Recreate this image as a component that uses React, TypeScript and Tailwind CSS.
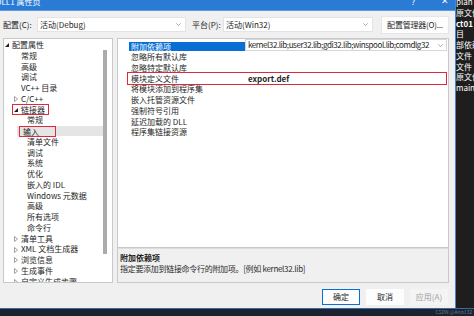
import React from "react";

type TreeItem = { t: string; lvl: 0 | 1 | 2; tri?: "open" | "closed"; red?: boolean; sel?: boolean };

const treeItems: TreeItem[] = [
  { t: "配置属性", lvl: 0, tri: "open" },
  { t: "常规", lvl: 1 },
  { t: "高级", lvl: 1 },
  { t: "调试", lvl: 1 },
  { t: "VC++ 目录", lvl: 1 },
  { t: "C/C++", lvl: 1, tri: "closed" },
  { t: "链接器", lvl: 1, tri: "open", red: true },
  { t: "常规", lvl: 2 },
  { t: "输入", lvl: 2, sel: true },
  { t: "清单文件", lvl: 2 },
  { t: "调试", lvl: 2 },
  { t: "系统", lvl: 2 },
  { t: "优化", lvl: 2 },
  { t: "嵌入的 IDL", lvl: 2 },
  { t: "Windows 元数据", lvl: 2 },
  { t: "高级", lvl: 2 },
  { t: "所有选项", lvl: 2 },
  { t: "命令行", lvl: 2 },
  { t: "清单工具", lvl: 1, tri: "closed" },
  { t: "XML 文档生成器", lvl: 1, tri: "closed" },
  { t: "浏览信息", lvl: 1, tri: "closed" },
  { t: "生成事件", lvl: 1, tri: "closed" },
  { t: "自定义生成步骤", lvl: 1, tri: "closed" },
];

const props: { k: string; v?: string; bold?: boolean; sel?: boolean; red?: boolean }[] = [
  { k: "附加依赖项", v: "kernel32.lib;user32.lib;gdi32.lib;winspool.lib;comdlg32", sel: true },
  { k: "忽略所有默认库" },
  { k: "忽略特定默认库" },
  { k: "模块定义文件", v: "export.def", bold: true, red: true },
  { k: "将模块添加到程序集" },
  { k: "嵌入托管资源文件" },
  { k: "强制符号引用" },
  { k: "延迟加载的 DLL" },
  { k: "程序集链接资源" },
];

const darkLines: { t: string; bold?: boolean }[] = [
  { t: "plan" },
  { t: "原文件" },
  { t: "ct01", bold: true },
  { t: "目" },
  { t: "部依赖" },
  { t: "文件" },
  { t: "文件" },
  { t: "原文件" },
  { t: " main" },
];

function Tri({ kind }: { kind?: "open" | "closed" }) {
  if (kind === "open")
    return (
      <svg width="4" height="4" viewBox="0 0 4 4">
        <polygon points="4,0 4,4 0,4" fill="#1e1e1e" />
      </svg>
    );
  if (kind === "closed")
    return (
      <svg width="4" height="6" viewBox="0 0 4 6">
        <polygon points="0.5,0.5 3.5,3 0.5,5.5" fill="none" stroke="#8a8a8a" strokeWidth="0.8" />
      </svg>
    );
  return null;
}

function Combo({ text, className }: { text: string; className: string }) {
  return (
    <div className={`flex items-center justify-between bg-white border border-[#e3e3e3] h-[15px] pl-[2px] pr-[4px] ${className}`}>
      <span>{text}</span>
      <svg width="5" height="3" viewBox="0 0 5 3">
        <polyline points="0.3,0.3 2.5,2.6 4.7,0.3" fill="none" stroke="#8a8a8a" strokeWidth="0.7" />
      </svg>
    </div>
  );
}

export default function App() {
  return (
    <div className="w-[474px] h-[316px] overflow-hidden flex flex-col bg-[#1f1f1f] font-['Noto_Sans_CJK_SC','Noto_Sans',sans-serif] text-[8px] text-[#1e1e1e]">
      <div className="flex h-[308px]">
        {/* dialog */}
        <div className="w-[456px] flex flex-col bg-[#f0f0f0] border-r border-[#4a86c8]">
          {/* title bar */}
          <div className="h-[10px] bg-[#2a7bd6] flex items-start text-white overflow-hidden">
            <span className="-mt-[3px] -ml-[4px] leading-[10px]">DLL1 属性页</span>
            <span className="ml-auto -mt-[3px] leading-[10px] mr-[26px]">?</span>
            <span className="-mt-[4px] leading-[10px] mr-[6px] text-[9px]">✕</span>
          </div>
          {/* config row */}
          <div className="h-[28px] flex items-center pl-[3px] border-t border-[#5a9be0]">
            <span className="w-[34px]">配置(C):</span>
            <Combo text="活动(Debug)" className="w-[149px]" />
            <span className="ml-[6px] w-[31px]">平台(P):</span>
            <Combo text="活动(Win32)" className="w-[150px]" />
            <div className="ml-[8px] w-[68px] h-[18px] bg-[#fdfdfd] border border-[#e6e6e6] flex items-center justify-center tracking-[-0.2px]">
              配置管理器(O)...
            </div>
          </div>
          {/* main */}
          <div className="flex h-[245px] pl-[3px]">
            {/* tree */}
            <div className="w-[110px] bg-white border border-[#c9c9c9] flex overflow-hidden">
              <div className="flex-1 pt-[1px] overflow-hidden">
                {treeItems.map((it, i) => (
                  <div key={i} className="h-[10.75px] leading-[10.75px] flex items-center whitespace-nowrap relative">
                    {it.sel && <div className="absolute left-[13px] right-0 top-0 h-[10px] bg-[#e5e5e5]" />}
                    <div
                      className={
                        it.lvl === 0
                          ? "pl-[1px] flex items-center"
                          : it.lvl === 1
                          ? "pl-[10px] flex items-center"
                          : it.sel
                          ? "pl-[16px] flex items-center"
                          : "pl-[23px] flex items-center"
                      }
                    >
                      {it.red ? (
                        <span className="flex items-center h-[9px] outline outline-1 outline-[#e0283c] -ml-[1px] pl-[1px] pr-[3px]">
                          <span className="w-[7px] flex items-center">
                            <Tri kind={it.tri} />
                          </span>
                          <span className="leading-[9px]">{it.t}</span>
                        </span>
                      ) : (
                        <>
                          {it.lvl < 2 && (
                            <span className="w-[7px] flex items-center">
                              <Tri kind={it.tri} />
                            </span>
                          )}
                          <span
                            className={
                              it.sel
                                ? "relative outline outline-1 outline-[#e0283c] pl-[3px] pr-[16px] leading-[9px] h-[9px]"
                                : "relative"
                            }
                          >
                            {it.t}
                          </span>
                        </>
                      )}
                    </div>
                  </div>
                ))}
              </div>
              <div className="w-[9px] flex justify-start pt-[11px] pb-[28px]">
                <div className="w-[4px] h-full bg-[#acacac]" />
              </div>
            </div>
            {/* right column */}
            <div className="ml-[4px] w-[332px] flex flex-col">
              <div className="h-[210px] bg-white border border-[#c9c9c9] pt-[2px] pl-[11px] pr-[1px]">
                {props.map((p, i) => (
                  <div key={i} className="h-[10.75px] flex items-center relative">
                    {p.red && <div className="absolute -left-[2px] right-0 -top-[1px] h-[13px] border border-[#e0283c]" />}
                    <div className={p.sel ? "w-[116px] h-[9px] leading-[9px] bg-[#0a6fd4] text-white pl-[2px]" : "w-[116px] pl-[2px]"}>
                      {p.k}
                    </div>
                    {p.sel ? (
                      <div className="flex-1 h-[12px] -mt-[2px] border border-[#d6d6d6] flex items-center justify-between pl-[2px] pr-[3px] whitespace-nowrap overflow-hidden">
                        <span className="tracking-[-0.42px]">{p.v}</span>
                        <svg width="5" height="3" viewBox="0 0 5 3" className="shrink-0">
                          <polyline points="0.3,0.3 2.5,2.6 4.7,0.3" fill="none" stroke="#8a8a8a" strokeWidth="0.7" />
                        </svg>
                      </div>
                    ) : (
                      <div className={p.bold ? "flex-1 pl-[3px] font-bold" : "flex-1 pl-[3px]"}>{p.v}</div>
                    )}
                  </div>
                ))}
              </div>
              <div className="h-[35px] border border-[#c9c9c9] border-t-[#dcdcdc] bg-[#f0f0f0] pl-[2px] pt-[3px] leading-[11px]">
                <div className="font-bold">附加依赖项</div>
                <div className="text-[#2b2b2b] tracking-[-0.3px]">指定要添加到链接命令行的附加项。[例如 kernel32.lib]</div>
              </div>
            </div>
          </div>
          {/* buttons */}
          <div className="flex-1 flex items-center justify-end pr-[7px] gap-[6px] pt-[2px]">
            <div className="w-[38px] h-[16px] bg-[#fdfdfd] border border-[#0a6fd4] flex items-center justify-center">确定</div>
            <div className="w-[38px] h-[16px] bg-[#fdfdfd] flex items-center justify-center">取消</div>
            <div className="w-[38px] h-[16px] bg-[#f4f4f4] text-[#a0a0a0] flex items-center justify-center">应用(A)</div>
          </div>
        </div>
        {/* dark side */}
        <div className="flex-1 bg-[#1e1e1e] text-white overflow-hidden">
          <div className="-mt-[3px]">
            {darkLines.map((l, i) => (
              <div key={i} className={l.bold ? "h-[10.75px] leading-[10.75px] whitespace-nowrap font-bold" : "h-[10.75px] leading-[10.75px] whitespace-nowrap"}>
                {l.t}
              </div>
            ))}
          </div>
        </div>
      </div>
      <div className="flex-1 bg-[#1b2230] border-t border-[#3a6aa0] flex justify-end items-start pr-[2px]">
        <span className="text-[5px] text-[#6e7a8a] leading-[6px]">CSDN @Ano132</span>
      </div>
    </div>
  );
}
